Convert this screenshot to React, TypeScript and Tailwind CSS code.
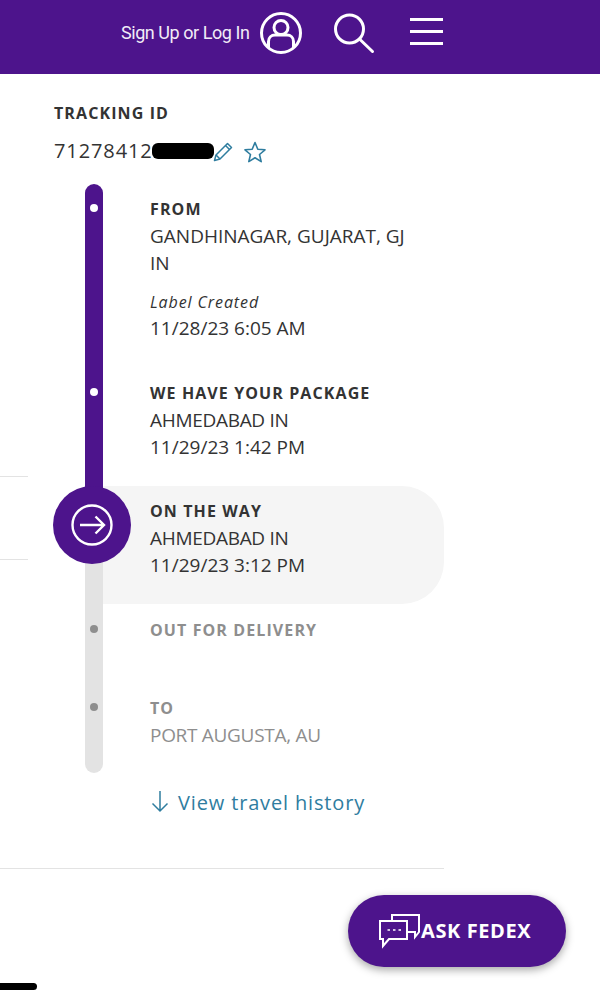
const font = { fontFamily: '"Open Sans", "Noto Sans", sans-serif' };

function Head({ children, muted }: { children: React.ReactNode; muted?: boolean }) {
  return (
    <div className={`h-[24px] text-[16px] leading-[20px] font-bold tracking-[1.1px] whitespace-nowrap ${muted ? "text-[#8e8e8e]" : "text-[#333333]"}`}>
      {children}
    </div>
  );
}

function Line({ children, muted, tight }: { children: React.ReactNode; muted?: boolean; tight?: boolean }) {
  return <div className={`h-[27px] text-[19px] leading-[27px] whitespace-nowrap ${tight ? "tracking-[-0.3px]" : ""} ${muted ? "text-[#8e8e8e]" : "text-[#333333]"}`}>{children}</div>;
}

export default function App() {
  return (
    <div className="relative w-[600px] h-[1000px] bg-white overflow-hidden" style={font}>
      <header className="h-[74px] bg-[#4d148c] flex items-start pl-[121px] pt-[11px] text-white">
        <span className="mt-[10px] w-[130px] text-[18px] leading-[24px] tracking-[-0.45px] text-[#f1ecf7] whitespace-nowrap" style={{ fontFamily: "Roboto, sans-serif" }}>
          Sign Up or Log In
        </span>
        <svg width="44" height="44" viewBox="0 0 44 44" fill="none" stroke="white" strokeWidth="3" className="ml-[8px]">
          <circle cx="22" cy="22" r="19.5" />
          <circle cx="22" cy="16.5" r="7" />
          <path d="M9.5 36V30.5C9.5 26.5 12.5 24 16 24H28C31.5 24 34.5 26.5 34.5 30.5V36" />
        </svg>
        <svg width="44" height="44" viewBox="0 0 44 44" fill="none" stroke="white" strokeWidth="3" strokeLinecap="round" className="ml-[28px]">
          <circle cx="18.5" cy="18" r="14" />
          <path d="M28.5 28L41.5 40.5" />
        </svg>
        <div className="ml-[35px] mt-[7px] flex flex-col gap-[9px] w-[33px]">
          <div className="h-[3px] bg-white" />
          <div className="h-[3px] bg-white" />
          <div className="h-[3px] bg-white" />
        </div>
      </header>

      <section className="pl-[54px] pt-[30px]">
        <div className="h-[18px] text-[16px] leading-[18px] font-bold tracking-[1.1px] text-[#333333]">TRACKING ID</div>
        <div className="mt-[14px] h-[30px] flex items-center text-[#333333]">
          <span className="text-[20px] tracking-[0.9px] leading-[30px]">71278412</span>
          <div className="w-[62px] h-[16px] -ml-[1px] rounded-[6px] bg-black" />
          <svg width="22" height="22" viewBox="0 0 22 22" fill="none" stroke="#2f7d9f" strokeWidth="1.5" strokeLinejoin="round" className="-ml-[2px] mt-[1px]">
            <path d="M2.5 19.5L4 14L15.5 2.5L19.5 6.5L8 18L2.5 19.5Z" />
            <path d="M4 14L8 18M13.5 4.5L17.5 8.5" />
          </svg>
          <svg width="24" height="24" viewBox="0 0 24 24" fill="none" stroke="#2f7d9f" strokeWidth="1.6" strokeLinejoin="round" className="ml-[9px] mt-[2px]">
            <path d="M12 2.5L14.8 9.2L22 9.8L16.5 14.5L18.2 21.6L12 17.8L5.8 21.6L7.5 14.5L2 9.8L9.2 9.2L12 2.5Z" />
          </svg>
        </div>
      </section>

      <div className="relative flex mt-[18px] h-[589px]">
        <div className="ml-[85px] w-[18px] flex flex-col">
          <div className="h-[306px] rounded-t-[9px] bg-[#4d148c] flex flex-col items-center">
            <div className="mt-[20px] w-[8px] h-[8px] rounded-full bg-white" />
            <div className="mt-[176px] w-[8px] h-[8px] rounded-full bg-white" />
          </div>
          <div className="h-[283px] rounded-b-[9px] bg-[#e3e3e3] flex flex-col items-center">
            <div className="mt-[135px] w-[8px] h-[8px] rounded-full bg-[#8e8e8e]" />
            <div className="mt-[70px] w-[8px] h-[8px] rounded-full bg-[#8e8e8e]" />
          </div>
        </div>

        <div className="flex-1">
          <div className="h-[302px] pl-[47px] pt-[15px]">
            <Head>FROM</Head>
            <Line>GANDHINAGAR, GUJARAT, GJ</Line>
            <Line>IN</Line>
            <div className="mt-[13px] h-[25px] text-[16px] leading-[24px] italic tracking-[0.9px] text-[#333333]">Label Created</div>
            <Line>11/28/23 6:05 AM</Line>
            <div className="mt-[41px]">
              <Head>WE HAVE YOUR PACKAGE</Head>
              <Line tight>AHMEDABAD IN</Line>
              <Line>11/29/23 1:42 PM</Line>
            </div>
          </div>
          <div className="h-[118px] w-[341px] pl-[47px] pt-[15px] bg-[#f5f5f5] rounded-r-[42px]">
            <Head>ON THE WAY</Head>
            <Line tight>AHMEDABAD IN</Line>
            <Line>11/29/23 3:12 PM</Line>
          </div>
          <div className="pl-[47px] pt-[16px]">
            <Head muted>OUT FOR DELIVERY</Head>
            <div className="mt-[54px]">
              <Head muted>TO</Head>
            </div>
            <Line muted tight>PORT AUGUSTA, AU</Line>
          </div>
        </div>

        <div className="absolute left-[53px] top-[302px] w-[78px] h-[78px] rounded-full bg-[#4d148c] flex items-center justify-center">
          <svg width="42" height="42" viewBox="0 0 42 42" fill="none" stroke="white" strokeWidth="2.4">
            <circle cx="21" cy="21" r="19.5" />
            <path d="M9 21H33M24.5 12.5L33 21L24.5 29.5" />
          </svg>
        </div>
      </div>

      <div className="ml-[150px] mt-[16px] h-[28px] flex items-center text-[#2f7d9f]">
        <svg width="20" height="24" viewBox="0 0 20 24" fill="none" stroke="#2f7d9f" strokeWidth="1.5" className="-mt-[4px]">
          <path d="M10 2V22M2.5 14.5L10 22L17.5 14.5" />
        </svg>
        <span className="ml-[8px] text-[20px] leading-[28px] tracking-[0.85px]">View travel history</span>
      </div>

      <div className="mt-[51px] w-[444px] h-px bg-[#e3e3e3]" />

      <div className="absolute left-0 top-[476px] w-[28px] h-px bg-[#e3e3e3]" />
      <div className="absolute left-0 top-[559px] w-[28px] h-px bg-[#e3e3e3]" />

      <button className="absolute left-[348px] top-[895px] w-[218px] h-[72px] rounded-full bg-[#4d148c] shadow-[0_3px_8px_rgba(0,0,0,0.35)] flex items-center pl-[30px] text-white">
        <svg width="44" height="36" viewBox="0 0 44 36" fill="none" stroke="white" strokeWidth="2">
          <path d="M14 8V2H41V19L37 24V19H30" />
          <path d="M2 8H29V26H11L5 33V26H2V8Z" />
          <path d="M9.5 17H12M15 17H17.5M20.5 17H23" strokeWidth="1.6" />
        </svg>
        <span className="-ml-[1px] text-[20px] font-bold tracking-[0.6px] leading-[24px] whitespace-nowrap">ASK FEDEX</span>
      </button>

      <div className="absolute left-0 top-[983px] w-[37px] h-[7px] rounded-r-full bg-black" />
    </div>
  );
}
